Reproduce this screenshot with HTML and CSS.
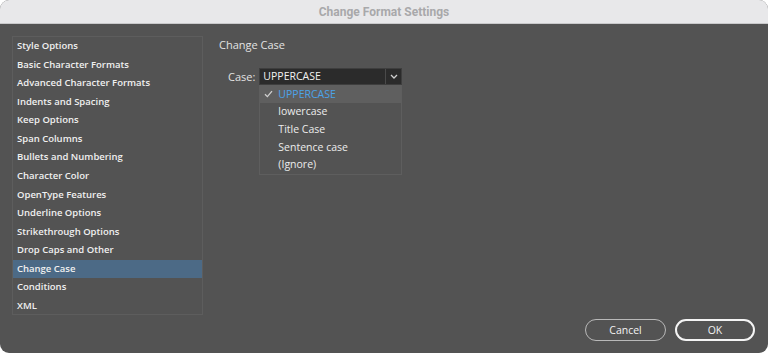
FILE: index.html
```html
<!DOCTYPE html>
<html lang="en">
<head>
    <meta charset="UTF-8">
    <meta name="viewport" content="width=device-width, initial-scale=1.0">
    <title>Change Format Settings</title>
    <link rel="stylesheet" href="styles.css">
</head>
<body>
    <div class="window">
        <div class="titlebar">Change Format Settings</div>
        <div class="dialog">
            <div class="main">
                <ul class="sections">
                    <li>Style Options</li>
                    <li>Basic Character Formats</li>
                    <li>Advanced Character Formats</li>
                    <li>Indents and Spacing</li>
                    <li>Keep Options</li>
                    <li>Span Columns</li>
                    <li>Bullets and Numbering</li>
                    <li>Character Color</li>
                    <li>OpenType Features</li>
                    <li>Underline Options</li>
                    <li>Strikethrough Options</li>
                    <li>Drop Caps and Other</li>
                    <li class="selected">Change Case</li>
                    <li>Conditions</li>
                    <li>XML</li>
                </ul>

                <div class="panel">
                    <h2>Change Case</h2>
                    <div class="field">
                        <span class="field-label">Case:</span>
                        <div class="combo">
                            <div class="select">
                                <span class="select-value">UPPERCASE</span>
                                <span class="select-arrow">
                                    <svg width="8" height="5" viewBox="0 0 8 5">
                                        <path d="M1 1 L4 4 L7 1" fill="none" stroke="#cfcfcf" stroke-width="1.3"/>
                                    </svg>
                                </span>
                            </div>
                            <ul class="menu">
                                <li class="checked">
                                    <svg class="check" width="9" height="8" viewBox="0 0 9 8">
                                        <path d="M1 4.2 L3.4 6.6 L8 1.2" fill="none" stroke="#d0d0d0" stroke-width="1.3"/>
                                    </svg>
                                    UPPERCASE
                                </li>
                                <li>lowercase</li>
                                <li>Title Case</li>
                                <li>Sentence case</li>
                                <li>(Ignore)</li>
                            </ul>
                        </div>
                    </div>
                </div>
            </div>

            <div class="actions">
                <button class="btn">Cancel</button>
                <button class="btn btn-default">OK</button>
            </div>
        </div>
    </div>
</body>
</html>
```

FILE: styles.css
```css
html, body {
    margin: 0;
    padding: 0;
    background-color: #ffffff;
}

body {
    font-family: 'Open Sans', 'DejaVu Sans', sans-serif;
    width: 768px;
    height: 353px;
    overflow: hidden;
}

.window {
    width: 768px;
    height: 353px;
    display: flex;
    flex-direction: column;
    border-radius: 9px;
    overflow: hidden;
    background-color: #535353;
}

.titlebar {
    height: 23px;
    flex: none;
    background-color: #e8e8ea;
    border-bottom: 1px solid #c9c9cb;
    color: #a8a8aa;
    font-family: 'Roboto', 'Liberation Sans', sans-serif;
    font-weight: 700;
    font-size: 12px;
    line-height: 24px;
    text-align: center;
}

.dialog {
    flex: 1;
    display: flex;
    flex-direction: column;
    padding: 12px 13px 12px 12px;
    box-sizing: border-box;
}

.main {
    flex: 1;
    display: flex;
}

.sections {
    list-style: none;
    margin: 0;
    padding: 0;
    width: 191px;
    height: 279px;
    box-sizing: border-box;
    border: 1px solid #5d5d5d;
}

.sections li {
    height: 18.57px;
    line-height: 18.57px;
    padding-left: 4px;
    font-size: 9.5px;
    font-weight: 600;
    color: #f0f0f0;
    white-space: nowrap;
}

.sections li.selected {
    background-color: #4c6a86;
}

.panel {
    margin-left: 16px;
    flex: 1;
}

.panel h2 {
    margin: 1px 0 0 0;
    font-size: 11px;
    font-weight: 400;
    color: #e2e2e2;
    line-height: 15px;
}

.field {
    display: flex;
    align-items: flex-start;
    margin-top: 16px;
    margin-left: 9px;
}

.field-label {
    font-size: 11px;
    color: #e2e2e2;
    line-height: 17px;
    margin-right: 4px;
}

.combo {
    width: 143px;
}

.select {
    display: flex;
    height: 17px;
    box-sizing: border-box;
    border: 1px solid #3e3e3e;
    background-color: #2b2b2b;
}

.select-value {
    flex: 1;
    padding-left: 3px;
    font-size: 10.5px;
    line-height: 15px;
    color: #f2f2f2;
}

.select-arrow {
    width: 15px;
    border-left: 1px solid #4a4a4a;
    display: flex;
    align-items: center;
    justify-content: center;
}

.menu {
    list-style: none;
    margin: 0;
    padding: 0;
    border: 1px solid #5e5e5e;
    border-top: none;
    background-color: #535353;
}

.menu li {
    position: relative;
    height: 17.8px;
    line-height: 17.8px;
    padding-left: 18px;
    font-size: 10.5px;
    color: #ececec;
}

.menu li:first-child {
    height: 18px;
    line-height: 18px;
}

.menu li.checked {
    background-color: #5f5f5f;
    color: #4ba3ea;
}

.menu .check {
    position: absolute;
    left: 4px;
    top: 5px;
}

.actions {
    display: flex;
    justify-content: flex-end;
    gap: 9px;
}

.btn {
    width: 81px;
    height: 22px;
    border-radius: 11px;
    background-color: transparent;
    border: 1.5px solid #b9b9b9;
    color: #f2f2f2;
    font-family: 'Open Sans', 'DejaVu Sans', sans-serif;
    font-size: 10.5px;
    padding: 0;
}

.btn-default {
    width: 80px;
    border: 2px solid #f4f4f4;
}
```
